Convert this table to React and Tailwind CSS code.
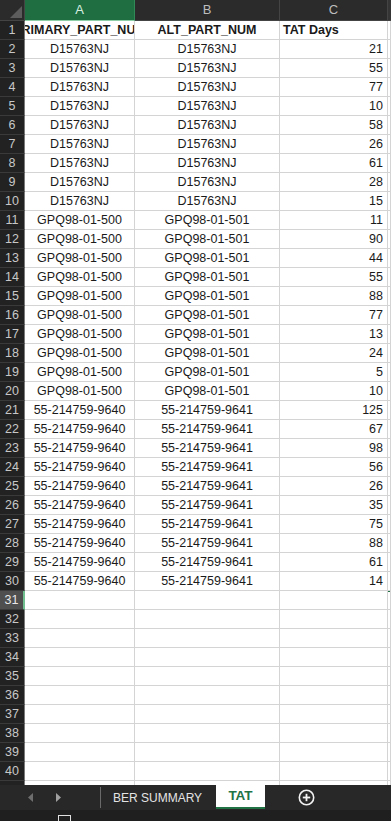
import React from 'react'

const data = [
  ['D15763NJ', 'D15763NJ', 21],
  ['D15763NJ', 'D15763NJ', 55],
  ['D15763NJ', 'D15763NJ', 77],
  ['D15763NJ', 'D15763NJ', 10],
  ['D15763NJ', 'D15763NJ', 58],
  ['D15763NJ', 'D15763NJ', 26],
  ['D15763NJ', 'D15763NJ', 61],
  ['D15763NJ', 'D15763NJ', 28],
  ['D15763NJ', 'D15763NJ', 15],
  ['GPQ98-01-500', 'GPQ98-01-501', 11],
  ['GPQ98-01-500', 'GPQ98-01-501', 90],
  ['GPQ98-01-500', 'GPQ98-01-501', 44],
  ['GPQ98-01-500', 'GPQ98-01-501', 55],
  ['GPQ98-01-500', 'GPQ98-01-501', 88],
  ['GPQ98-01-500', 'GPQ98-01-501', 77],
  ['GPQ98-01-500', 'GPQ98-01-501', 13],
  ['GPQ98-01-500', 'GPQ98-01-501', 24],
  ['GPQ98-01-500', 'GPQ98-01-501', 5],
  ['GPQ98-01-500', 'GPQ98-01-501', 10],
  ['55-214759-9640', '55-214759-9641', 125],
  ['55-214759-9640', '55-214759-9641', 67],
  ['55-214759-9640', '55-214759-9641', 98],
  ['55-214759-9640', '55-214759-9641', 56],
  ['55-214759-9640', '55-214759-9641', 26],
  ['55-214759-9640', '55-214759-9641', 35],
  ['55-214759-9640', '55-214759-9641', 75],
  ['55-214759-9640', '55-214759-9641', 88],
  ['55-214759-9640', '55-214759-9641', 61],
  ['55-214759-9640', '55-214759-9641', 14],
]

const cell = 'h-[19px] border-r border-b border-[#d4d4d4] flex items-center overflow-hidden whitespace-nowrap'

function Row({ n, a, b, c, bold }) {
  const selected = n === 31
  return (
    <div className="grid grid-cols-[25px_110px_145px_108px_1fr]">
      <div
        className={
          selected
            ? 'h-[19px] bg-[#4f4f4f] text-[#e8e8e8] border-b border-[#3a3a3a] border-r-2 border-r-[#6fbf8f] flex items-center justify-center'
            : 'h-[19px] bg-[#222222] text-[#c8c8c8] border-b border-[#3a3a3a] border-r border-r-[#7a7a7a] flex items-center justify-center'
        }
      >
        {n}
      </div>
      <div className={cell + ' justify-center' + (bold ? ' font-bold' : '')}>{a}</div>
      <div className={cell + ' justify-center' + (bold ? ' font-bold' : '')}>{b}</div>
      <div className={cell + (bold ? ' font-bold justify-start pl-[3px]' : ' justify-end pr-[4px]')}>{c}</div>
      <div className={'relative ' + cell}>
        {selected && (
          <div className="absolute -left-[2px] -top-[1px] w-[12px] h-[21px] border-2 border-[#217346]" />
        )}
      </div>
    </div>
  )
}

export default function App() {
  const empty = []
  for (let i = 31; i <= 41; i++) empty.push(i)

  return (
    <div className="w-[391px] h-[821px] overflow-hidden bg-white flex flex-col text-[12.5px] text-[#1a1a1a] font-['Liberation_Sans',Arial,sans-serif]">
      <div className="h-[785px] shrink-0 overflow-hidden">
        {/* column letters */}
        <div className="grid grid-cols-[25px_110px_145px_108px_1fr] h-[21px] bg-[#2b2b2b] text-[13px] text-[#bdbdbd]">
          <div className="relative border-r border-b border-[#444444]">
            <svg className="absolute right-[2px] bottom-[2px]" width="12" height="12" viewBox="0 0 12 12">
              <polygon points="12,0 12,12 0,12" fill="#5c5c5c" />
            </svg>
          </div>
          <div className="bg-[#1e6e42] text-[#d8efe0] border-r border-b border-b-[#8fcfa8] border-r-[#2f8a57] flex items-center justify-center">A</div>
          <div className="border-r border-b border-[#444444] flex items-center justify-center">B</div>
          <div className="border-r border-b border-[#444444] flex items-center justify-center">C</div>
          <div className="bg-[#353535] border-b border-[#444444]" />
        </div>

        <Row n={1} a="PRIMARY_PART_NUM" b="ALT_PART_NUM" c="TAT Days" bold />
        {data.map((r, i) => (
          <Row key={i} n={i + 2} a={r[0]} b={r[1]} c={r[2]} />
        ))}
        {empty.map(n => (
          <Row key={n} n={n} a="" b="" c="" />
        ))}
      </div>

      {/* sheet tabs */}
      <div className="h-[25px] shrink-0 bg-[#282828] flex items-start">
        <div className="w-[100px] h-[25px] flex items-center">
          <svg className="ml-[28px]" width="6" height="9" viewBox="0 0 6 9">
            <polygon points="5,0 5,9 0,4.5" fill="#6e6e6e" />
          </svg>
          <svg className="ml-[22px]" width="6" height="9" viewBox="0 0 6 9">
            <polygon points="0,0 0,9 5,4.5" fill="#a0a0a0" />
          </svg>
        </div>
        <div className="w-px h-[21px] mt-[2px] bg-[#6a6a6a]" />
        <div className="ml-[12px] w-[90px] h-[25px] flex items-center text-[#e4e4e4] text-[12px] whitespace-nowrap">BER SUMMARY</div>
        <div className="ml-[13px] w-[49px] h-[24px] bg-white border-b-2 border-[#217346] flex items-center justify-center font-bold text-[#217346] text-[13.5px]">
          TAT
        </div>
        <div className="ml-[33px] h-[25px] flex items-center">
          <svg width="17" height="17" viewBox="0 0 17 17">
            <circle cx="8.5" cy="8.5" r="7.2" fill="none" stroke="#f2f2f2" strokeWidth="1.6" />
            <line x1="8.5" y1="4.8" x2="8.5" y2="12.2" stroke="#f2f2f2" strokeWidth="1.8" />
            <line x1="4.8" y1="8.5" x2="12.2" y2="8.5" stroke="#f2f2f2" strokeWidth="1.8" />
          </svg>
        </div>
      </div>

      {/* status strip */}
      <div className="flex-1 bg-[#1f1f1f] pt-[5px]">
        <div className="ml-[58px] w-[13px] h-[10px] border border-b-0 border-[#e0e0e0]" />
      </div>
    </div>
  )
}
